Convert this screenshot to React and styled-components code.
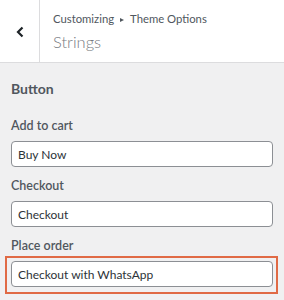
import React from 'react';
import styled, { createGlobalStyle } from 'styled-components';

const GlobalStyle = createGlobalStyle`
  html, body {
    margin: 0;
    padding: 0;
    background: #f0f0f1;
  }
  body {
    font-family: Lato, "Open Sans", sans-serif;
    color: #50575e;
  }
`;

const Panel = styled.div`
  width: 284px;
  height: 300px;
  overflow: hidden;
  background: #f0f0f1;
`;

const Header = styled.div`
  display: flex;
  height: 62px;
  background: #fff;
  border-bottom: 1px solid #dcdcde;
`;

const BackButton = styled.button`
  width: 40px;
  flex: none;
  display: flex;
  align-items: center;
  justify-content: center;
  padding: 1px 0 0;
  background: #fff;
  border: none;
  border-right: 1px solid #dcdcde;
  color: #1d2327;
`;

const Titles = styled.div`
  display: flex;
  flex-direction: column;
  padding: 11px 0 0 13px;
`;

const Crumb = styled.div`
  display: flex;
  align-items: center;
  font-size: 11.3px;
  line-height: 16px;
  color: #50575e;
`;

const Arrow = styled.span`
  width: 0;
  height: 0;
  margin: 1px 6px 0 6px;
  border-left: 4px solid #50575e;
  border-top: 2.5px solid transparent;
  border-bottom: 2.5px solid transparent;
`;

const Title = styled.h3`
  margin: 4px 0 0;
  font-size: 16.5px;
  line-height: 22px;
  font-weight: 300;
  color: #787c82;
`;

const Body = styled.div`
  padding: 17px 11px 0 11px;
  display: flex;
  flex-direction: column;
`;

const Heading = styled.h4`
  margin: 0 0 19px;
  font-size: 14px;
  line-height: 18px;
  font-weight: 700;
  color: #50575e;
`;

const Control = styled.div`
  display: flex;
  flex-direction: column;
  margin-bottom: 10px;
`;

const Label = styled.label`
  font-size: 12.5px;
  line-height: 18px;
  font-weight: 600;
  color: #50575e;
  margin-bottom: ${p => (p.$tight ? '1px' : '6px')};
`;

const Frame = styled.div`
  margin: 0 -5px 0 -6px;
  padding: 3px 3px 5px 4px;
  border: 2px solid #e06a45;
`;

const Input = styled.input`
  box-sizing: border-box;
  width: 262px;
  height: 26px;
  padding: 0 6px;
  font-family: Lato, "Open Sans", sans-serif;
  font-size: 12px;
  color: #2c3338;
  background: #fff;
  border: 1px solid #8c8f94;
  border-radius: 4px;
  outline: none;
`;

const Chevron = () => (
  <svg width="10" height="12" viewBox="0 0 10 12">
    <path d="M7.5 1.5 L3 6 L7.5 10.5" fill="none" stroke="currentColor" strokeWidth="2.2" />
  </svg>
);

const fields = [
  { label: 'Add to cart', value: 'Buy Now' },
  { label: 'Checkout', value: 'Checkout' },
];

export default function App() {
  return (
    <Panel>
      <GlobalStyle />
      <Header>
        <BackButton aria-label="Back">
          <Chevron />
        </BackButton>
        <Titles>
          <Crumb>
            Customizing<Arrow />Theme Options
          </Crumb>
          <Title>Strings</Title>
        </Titles>
      </Header>
      <Body>
        <Heading>Button</Heading>
        {fields.map(f => (
          <Control key={f.label}>
            <Label>{f.label}</Label>
            <Input defaultValue={f.value} />
          </Control>
        ))}
        <Control>
          <Label $tight>Place order</Label>
          <Frame>
            <Input defaultValue="Checkout with WhatsApp" />
          </Frame>
        </Control>
      </Body>
    </Panel>
  );
}
